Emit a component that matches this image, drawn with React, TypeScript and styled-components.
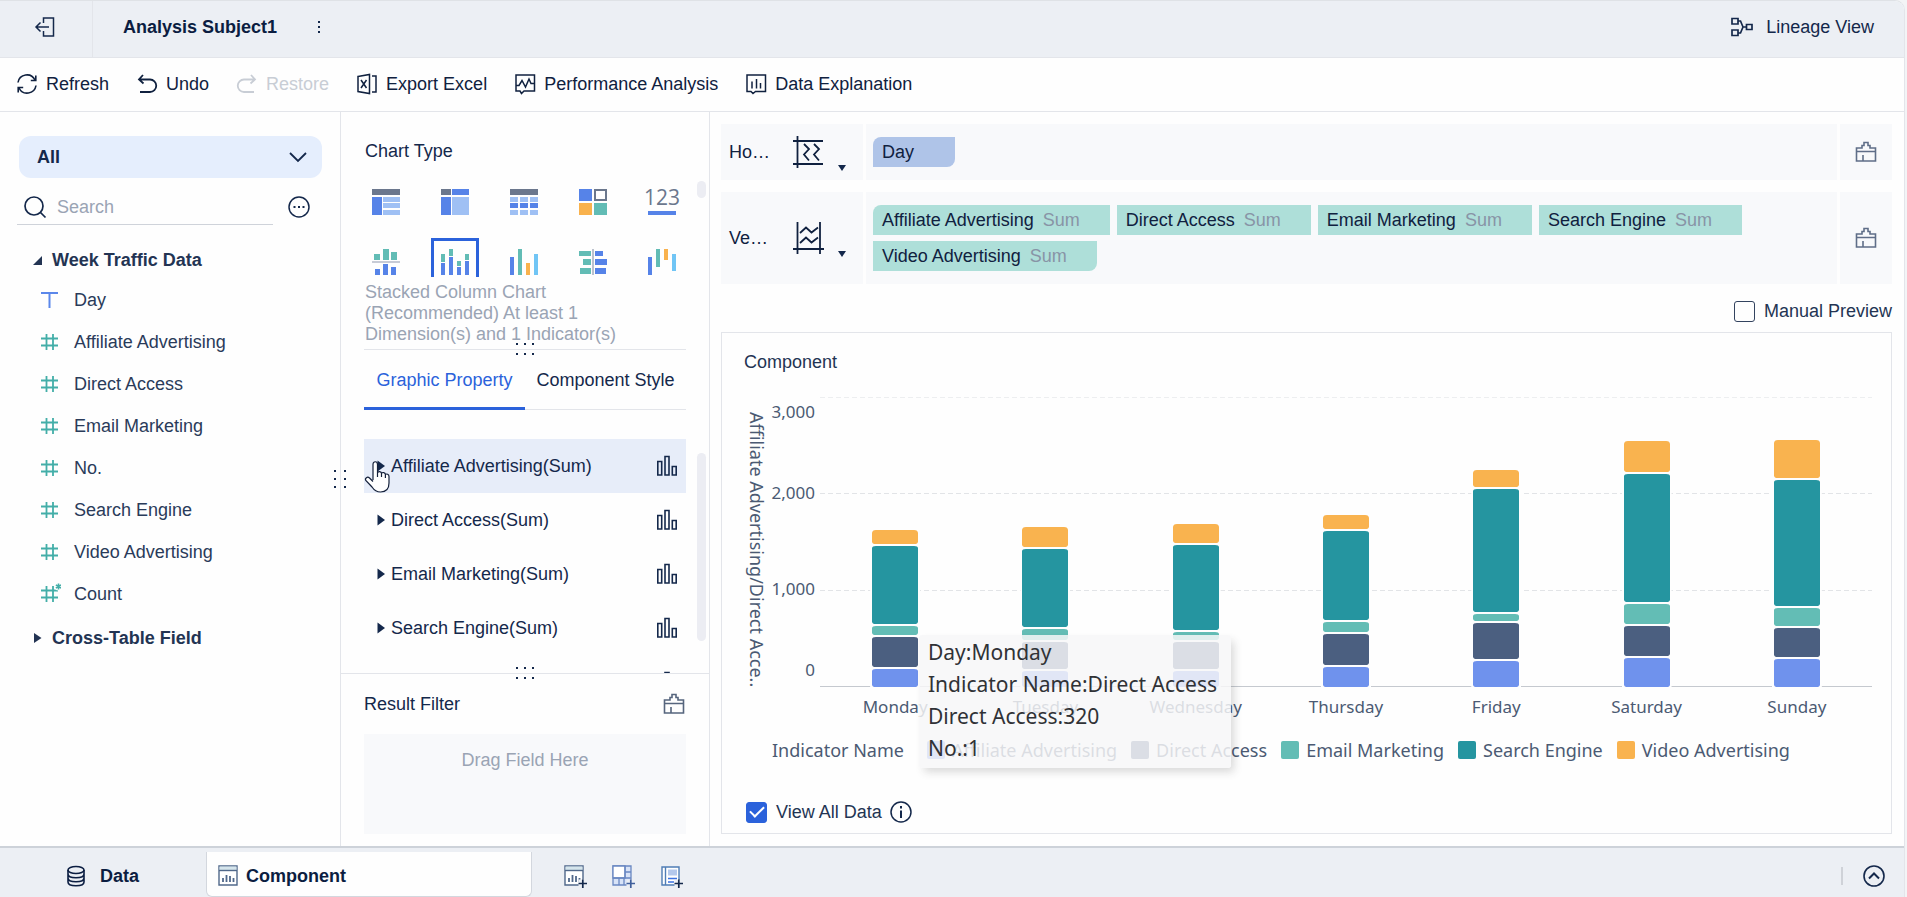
import React from "react";
import styled, { createGlobalStyle, css } from "styled-components";

const ink = "#14284b";
const line = "#e3e5ea";
const muted = "#9aa4b4";
const blue = "#2b62db";
const chartFont = `"Noto Sans", "Open Sans", sans-serif`;

const GlobalStyle = createGlobalStyle`
  * { box-sizing: border-box; }
  html, body, #root { height: 100%; margin: 0; }
  body {
    background: #f3f4f6;
    color: ${ink};
    font: 18px/22px "Liberation Sans", Arial, sans-serif;
    overflow: hidden;
  }
  button, input, select { font: inherit; color: inherit; }
  button { border: 0; padding: 0; background: none; cursor: pointer; text-align: left; }
  ul { list-style: none; margin: 0; padding: 0; }
  h1, h2, p { margin: 0; font: inherit; }
`;

/* ---------- shell ---------- */

const Shell = styled.div`
  height: 100%;
  min-height: 720px;
  margin-right: 2px;
  display: flex;
  flex-direction: column;
  background: #fefefe;
  border-top: 1px solid #dfe2e6;
  border-right: 1px solid ${line};
  border-top-right-radius: 10px;
  overflow: hidden;
`;

const Header = styled.header`
  height: 57px;
  flex: none;
  display: flex;
  align-items: stretch;
  background: #eceff4;
  border-bottom: 1px solid ${line};
  padding-bottom: 4px;
`;

const ExitButton = styled.button`
  width: 93px;
  margin-bottom: -4px;
  padding: 0 0 4px 34px;
  border-right: 1px solid ${line};
  display: flex;
  align-items: center;
`;

const Title = styled.h1`
  align-self: center;
  margin-left: 30px;
  font-weight: bold;
  color: #0b1d41;
`;

const MoreButton = styled.button`
  margin-left: 32px;
  width: 20px;
  display: flex;
  align-items: center;
  justify-content: center;
`;

const LineageButton = styled.button`
  margin-left: auto;
  margin-right: 30px;
  display: flex;
  align-items: center;
  gap: 13px;
`;

const Toolbar = styled.nav`
  height: 54px;
  flex: none;
  display: flex;
  align-items: center;
  gap: 27px;
  padding: 0 0 2px 16px;
  border-bottom: 1px solid ${line};
`;

const ToolButton = styled.button`
  display: flex;
  align-items: center;
  gap: 8px;
  color: #10213f;
  white-space: nowrap;
  &:disabled { color: #c8cdd5; }
`;

const Icon = styled.svg<{ $size?: number; $w?: number }>`
  width: ${(p) => p.$size ?? 22}px;
  height: ${(p) => p.$size ?? 22}px;
  flex: none;
  display: block;
  fill: none;
  stroke: currentColor;
  stroke-width: ${(p) => p.$w ?? 1.6};
`;

const Body = styled.div`
  flex: 1;
  min-height: 0;
  display: grid;
  grid-template-columns: 341px 369px minmax(0, 1fr);
`;

/* ---------- fields panel ---------- */

const FieldsPanel = styled.aside`
  position: relative;
  border-right: 1px solid ${line};
  padding: 24px 18px 0 19px;
`;

const SelectWrap = styled.label`
  position: relative;
  display: block;
  svg { position: absolute; right: 13px; top: 10px; pointer-events: none; }
`;

const TableSelect = styled.select`
  appearance: none;
  width: 100%;
  height: 42px;
  padding: 0 18px;
  border: 0;
  border-radius: 12px;
  background: #e5eefd;
  font-weight: bold;
  color: #14284b;
`;

const SearchRow = styled.div`
  display: flex;
  align-items: center;
  gap: 14px;
  margin: 11px 11px 0 -2px;
`;

const SearchBox = styled.label`
  flex: 1;
  min-width: 0;
  height: 36px;
  display: flex;
  align-items: center;
  gap: 10px;
  padding-left: 6px;
  border-bottom: 1px solid #cfd3da;
`;

const SearchInput = styled.input`
  flex: 1;
  min-width: 0;
  border: 0;
  padding: 0;
  outline: 0;
  background: none;
  &::placeholder { color: ${muted}; opacity: 1; }
`;

const IconButton = styled.button<{ $tone?: string }>`
  display: flex;
  align-items: center;
  justify-content: center;
  color: ${(p) => p.$tone ?? ink};
`;

const GroupButton = styled.button`
  display: flex;
  align-items: center;
  gap: 9px;
  height: 44px;
  padding-left: 14px;
  font-weight: bold;
  color: #233453;
`;

const FieldGroups = styled.div`
  margin-top: 13px;
`;

const FieldItem = styled.button`
  display: flex;
  align-items: center;
  gap: 13px;
  width: 100%;
  height: 42px;
  padding-left: 20px;
  color: #2a3b5a;
`;

const FieldList = styled.ul`
  margin: -3px 0 1px;
`;

/* ---------- drag handles, scroll thumbs ---------- */

const Grip = styled.svg<{ $upright?: boolean }>`
  position: absolute;
  fill: ${ink};
  ${(p) =>
    p.$upright
      ? css`right: -8px; top: 357px; width: 15px; height: 21px;`
      : css`left: 50%; bottom: -6px; margin-left: -10px; width: 21px; height: 13px;`}
`;

const Thumb = styled.div<{ $top: number; $height: number }>`
  position: absolute;
  right: 3px;
  top: ${(p) => p.$top}px;
  height: ${(p) => p.$height}px;
  width: 9px;
  border-radius: 5px;
  background: #ecedf3;
`;

/* ---------- property panel ---------- */

const PropertyPanel = styled.section`
  position: relative;
  min-height: 0;
  display: flex;
  flex-direction: column;
  border-right: 1px solid ${line};
`;

const ChartTypes = styled.div`
  position: relative;
  flex: none;
  height: 238px;
  margin: 0 23px;
  padding-top: 28px;
  border-bottom: 1px solid ${line};
  h2, p { padding-left: 1px; }
`;

const TypeGrid = styled.div`
  display: grid;
  grid-template-columns: repeat(5, 48px);
  justify-content: space-between;
  row-gap: 12px;
  height: 99px;
  margin: 16px 0 0 -2px;
  overflow: hidden;
`;

const TypeButton = styled.button<{ $active?: boolean }>`
  display: flex;
  align-items: center;
  justify-content: center;
  height: 48px;
  border: 3px solid ${(p) => (p.$active ? blue : "transparent")};
`;

const TypeIcon = styled.svg`
  width: 28px;
  height: 26px;
  flex: none;
  overflow: visible;
`;

const TypeHint = styled.p`
  margin-top: 5px;
  max-width: 290px;
  line-height: 21px;
  color: ${muted};
`;

const Tabs = styled.div`
  flex: none;
  display: flex;
  height: 60px;
  margin: 0 23px;
  box-shadow: inset 0 -1px ${line};
`;

const Tab = styled.button<{ $active?: boolean }>`
  flex: 1;
  text-align: center;
  white-space: nowrap;
  color: ${(p) => (p.$active ? blue : ink)};
  border-top: 3px solid transparent;
  border-bottom: 3px solid ${(p) => (p.$active ? blue : "transparent")};
`;

const Indicators = styled.div`
  position: relative;
  flex: 1;
  min-height: 0;
  border-bottom: 1px solid ${line};
`;

const IndicatorList = styled.ul`
  height: 100%;
  padding: 29px 23px 0;
  overflow: hidden;
`;

const IndicatorRow = styled.li<{ $hover?: boolean }>`
  height: 54px;
  display: flex;
  align-items: center;
  justify-content: space-between;
  padding: 0 8px 0 13px;
  background: ${(p) => (p.$hover ? "#e7edf9" : "transparent")};
`;

const IndicatorName = styled.button`
  display: flex;
  align-items: center;
  gap: 6px;
`;

const Pointer = styled.svg`
  position: absolute;
  left: 23px;
  top: 50px;
  width: 27px;
  height: 34px;
`;

const FilterSection = styled.div`
  flex: none;
  padding: 0 23px 12px;
`;

const FilterHead = styled.div`
  height: 60px;
  display: flex;
  align-items: center;
  justify-content: space-between;
  padding-right: 1px;
`;

const DropZone = styled.div`
  height: 100px;
  padding-top: 15px;
  text-align: center;
  color: ${muted};
  background: #f8f9fb;
`;

/* ---------- workspace ---------- */

const Workspace = styled.main`
  min-width: 0;
  display: flex;
  flex-direction: column;
  padding: 12px 12px 12px 11px;
`;

const Shelf = styled.div`
  flex: none;
  display: grid;
  grid-template-columns: 142px minmax(0, 1fr) 52px;
  gap: 3px;
  margin-bottom: 12px;
  > * { background: #f8f9fb; }
`;

const ShelfLabel = styled.div`
  display: flex;
  align-items: center;
  padding-left: 8px;
  color: #10213f;
`;

const AxisButton = styled.button`
  display: flex;
  align-items: center;
  gap: 14px;
  height: 38px;
  margin-left: auto;
  margin-right: 17px;
  > :last-child { align-self: flex-end; }
`;

const Pills = styled.ul`
  display: flex;
  flex-wrap: wrap;
  gap: 6px 7px;
  padding: 13px 7px;
`;

const Pill = styled.li<{ $tone: "blue" | "green" }>`
  height: 30px;
  min-width: 82px;
  display: flex;
  align-items: center;
  gap: 9px;
  padding: 0 30px 0 9px;
  color: #10213f;
  white-space: nowrap;
  background: ${(p) => (p.$tone === "blue" ? "#afc4e8" : "#aedfd9")};
  &:first-child { border-top-left-radius: 8px; }
  &:last-child { border-bottom-right-radius: 8px; }
`;

const Aggregate = styled.span`
  color: #8894a6;
`;

const PreviewRow = styled.div`
  flex: none;
  display: flex;
  justify-content: flex-end;
  align-items: center;
  height: 48px;
  margin-top: -12px;
  padding-top: 6px;
`;

const CheckLabel = styled.label`
  display: flex;
  align-items: center;
  gap: 9px;
  color: #233453;
`;

const Check = styled.input`
  appearance: none;
  width: 21px;
  height: 21px;
  margin: 0;
  border: 1px solid #33435f;
  border-radius: 3px;
  display: grid;
  place-items: center;
  &:checked { background: ${blue}; border-color: ${blue}; }
  &:checked::after {
    content: "";
    width: 12px;
    height: 6px;
    border: solid #fff;
    border-width: 0 0 2px 2px;
    transform: translateY(-2px) rotate(-45deg);
  }
`;

const Card = styled.section`
  flex: 1;
  min-height: 0;
  display: flex;
  flex-direction: column;
  padding: 18px 19px 0 22px;
  border: 1px solid ${line};
`;

const CardTitle = styled.h2`
  flex: none;
  color: #233453;
`;

const Chart = styled.div`
  flex: 1;
  min-height: 0;
  display: grid;
  grid-template-columns: 25px 46px minmax(0, 1fr);
  grid-template-rows: minmax(0, 1fr) 24px;
  row-gap: 8px;
  margin-top: 24px;
  font-family: ${chartFont};
  font-size: 17px;
  color: #4b5a73;
`;

const AxisTitle = styled.div`
  writing-mode: vertical-rl;
  align-self: end;
  white-space: nowrap;
  font-size: 18px;
  line-height: 25px;
`;

const Ticks = styled.div`
  display: grid;
  grid-template-rows: 1fr 2fr 2fr 1fr;
  align-items: center;
  padding-bottom: 2px;
  text-align: right;
  line-height: 30px;
  :first-child { align-self: start; }
  :last-child { align-self: end; }
`;

const Plot = styled.div`
  position: relative;
  display: grid;
  margin-left: 5px;
  > * { grid-area: 1 / 1; }
`;

const GridLines = styled.div`
  display: grid;
  grid-template-rows: repeat(3, 1fr);
  border-bottom: 1px solid #c5c9cf;
`;

const GridLine = styled.div<{ $faint?: boolean }>`
  opacity: ${(p) => (p.$faint ? 0.6 : 1)};
  background: repeating-linear-gradient(90deg, #e2e4e7 0 5px, transparent 5px 8px) top / 100% 1px no-repeat;
`;

const Bars = styled.div`
  display: grid;
  grid-template-columns: repeat(7, 1fr);
  align-items: end;
  justify-items: center;
`;

const Bar = styled.div`
  width: 46px;
  display: flex;
  flex-direction: column-reverse;
  background: #fefefe;
  box-shadow: 0 0 0 2px #fefefe;
  clip-path: inset(-2px -2px 0 -2px);
`;

const Segment = styled.div<{ $color: string }>`
  border-top: 2px solid transparent;
  border-radius: 4px 4px 2px 2px;
  background: ${(p) => p.$color} padding-box;
  &:last-child { border-top-width: 1px; }
`;

const DayLabels = styled.div`
  grid-column: 3;
  margin-left: 5px;
  display: grid;
  grid-template-columns: repeat(7, 1fr);
  text-align: center;
  line-height: 24px;
`;

const Legend = styled.ul`
  flex: none;
  display: flex;
  align-items: center;
  gap: 14px;
  height: 24px;
  margin: 19px 0 0 28px;
  font-family: ${chartFont};
  color: #4b5a73;
  white-space: nowrap;
`;

const LegendTitle = styled.li`
  margin-right: 9px;
`;

const LegendItem = styled.li<{ $color: string }>`
  display: flex;
  align-items: center;
  gap: 7px;
  &::before {
    content: "";
    width: 18px;
    height: 18px;
    border-radius: 2px;
    background: ${(p) => p.$color};
  }
`;

const Tooltip = styled.div`
  position: absolute;
  z-index: 1;
  left: 99px;
  top: 238px;
  width: 312px;
  padding: 1px 0 4px 9px;
  border-radius: 3px;
  background: rgba(247, 247, 248, 0.84);
  box-shadow: 4px 5px 8px -1px rgba(50, 50, 50, 0.18);
  font-size: 21px;
  line-height: 32px;
  color: #303236;
  white-space: nowrap;
`;

const CardFoot = styled.div`
  flex: none;
  display: flex;
  align-items: center;
  gap: 7px;
  height: 42px;
  margin: 29px 0 0 2px;
`;

/* ---------- bottom tabs ---------- */

const Footer = styled.footer`
  flex: none;
  height: 51px;
  display: flex;
  background: #eceff4;
  border-top: 2px solid #cdd2d9;
  padding-top: 4px;
`;

const SheetTab = styled.button<{ $active?: boolean }>`
  display: flex;
  align-items: center;
  padding-top: 3px;
  font-weight: bold;
  color: #0b1d41;
  ${(p) =>
    p.$active
      ? css`
          width: 326px;
          gap: 5px;
          padding-left: 10px;
          background: #fefefe;
          border: 1px solid #d3d7de;
          border-top: 0;
          border-radius: 0 0 6px 6px;
        `
      : css`
          width: 206px;
          gap: 12px;
          padding-left: 66px;
        `}
`;

const AddSheets = styled.div`
  display: flex;
  gap: 24px;
  padding: 2px 0 0 31px;
`;

const Collapse = styled.div`
  margin-left: auto;
  align-self: center;
  display: flex;
  padding: 0 18px 0 19px;
  border-left: 2px solid #cfd2d8;
  height: 18px;
  margin-top: 2px;
  align-items: center;
`;

/* ---------- icons ---------- */

const HashIcon = ({ starred = false }: { starred?: boolean }) => (
  <Icon viewBox="0 0 22 22" $w={1.8} color="#43aea8">
    <path d="M2 7.5h17M2 14.5h17M7.5 3v16M14 3v16" />
    {starred && (
      <g>
        <circle cx="19.5" cy="3.5" r="4" fill="#fefefe" stroke="none" />
        <path d="M19.5 .5v6M16.900 2l5.200 3M22.100 2l-5.200 3" strokeWidth="1.6" />
      </g>
    )}
  </Icon>
);

const TextIcon = () => (
  <Icon viewBox="0 0 22 22" $w={2} color="#5b87ea">
    <path d="M2 4h17M10.5 4v15" />
  </Icon>
);

const CaretRight = () => (
  <svg width="8" height="12" viewBox="0 0 8 12" fill={ink}>
    <path d="M.5 .5v11L8 6z" />
  </svg>
);

const BrushIcon = () => (
  <Icon viewBox="0 0 22 22" $w={1.6}>
    <path d="M1.500 7h5.500V4.500h2V1.500h4v3h2V7h5.500v13H1.500zM1.500 10.500h19M8 14v6" />
  </Icon>
);

const BarsIcon = () => (
  <Icon viewBox="0 0 22 22" $w={1.6}>
    <path d="M1.800 6.500h3.900v13.500H1.800zM9 1.500h4v18.500H9zM16.300 11.500h3.900V20h-3.900z" />
  </Icon>
);

const ChartPageIcon = ({ plus = false }: { plus?: boolean }) => (
  <Icon viewBox="0 0 24 24" $size={24} $w={1.4} color="#50688a">
    <path d="M2 2h18v19H2z" fill="#fff" />
    <path d="M2.500 2.500h17v3.500h-17z" fill="#d5e5ec" stroke="none" />
    <path d="M2 6.500h18" />
    <path d="M6 18v-4M9.500 18v-7M13 18v-6M16.500 18v-4" strokeWidth="1.800" />
    {plus && (
      <g>
        <path d="M15.500 15.500h8v8h-8z" fill="#eceff4" stroke="none" />
        <path d="M15.500 19.500h8.500M19.800 15.500v8.500" stroke="#14284b" strokeWidth="1.700" />
      </g>
    )}
  </Icon>
);

const DashboardIcon = () => (
  <Icon viewBox="0 0 24 24" $size={24} $w={1.3} color="#6a88c2">
    <path d="M2 2h18v19H2z" fill="#d8e3f7" />
    <path d="M2 2h12v12H2z" fill="#fff" />
    <path d="M14 2v12H2M14 8h6M14 14h6M8 14v7M13 14v7" />
    <path d="M15.500 15.500h8v8h-8z" fill="#eceff4" stroke="none" />
    <path d="M15.500 19.500h8.500M19.800 15.500v8.500" stroke="#3f5f9c" strokeWidth="1.700" />
  </Icon>
);

const ReportIcon = () => (
  <Icon viewBox="0 0 24 24" $size={24} $w={1.400} color="#4f7db5">
    <path d="M3 3h17v18H3z" fill="#fff" />
    <path d="M6.500 3v18" />
    <path d="M9 5.500h9v6H9z" fill="#b3c8ec" stroke="none" />
    <path d="M9 14.500h9M9 18h6" stroke="#3b72e0" />
    <path d="M15.500 16h8v7.500h-8z" fill="#eceff4" stroke="none" />
    <path d="M15.500 19.500h8.500M19.800 15.500v8.500" stroke="#14284b" strokeWidth="1.700" />
  </Icon>
);

const B = "#5683e8";
const L = "#9fc0f4";
const G = "#6b778d";
const T = "#62bcb5";
const O = "#f9b24d";
const S = "#70c5f5";

type Block = [number, number, number, number, string];

const chartTypes: { name: string; blocks: Block[] }[] = [
  { name: "Grouped Table", blocks: [[0, 0, 28, 6, G], [0, 8, 10, 18, B], [11, 8, 17, 5, L], [11, 14, 17, 5, L], [11, 21, 17, 5, L]] },
  { name: "Cross Table", blocks: [[0, 0, 10, 6, G], [11, 0, 17, 6, B], [0, 8, 10, 18, B], [11, 8, 17, 18, L]] },
  {
    name: "Detail Table",
    blocks: [
      [0, 0, 28, 6, G],
      ...[8, 14, 21].flatMap((y, r) => [0, 10, 20].map((x): Block => [x, y, 8, 5, r === 1 ? B : L])),
    ],
  },
  { name: "Color Table", blocks: [[0, 0, 13, 12, B], [0, 14, 13, 12, O], [15, 14, 13, 12, T]] },
  { name: "KPI Card", blocks: [[0, 22, 28, 4, B]] },
  { name: "Contrast Column", blocks: [[2, 5, 6, 6, T], [11, 0, 6, 11, T], [19, 3, 6, 8, T], [0, 12, 28, 2, "#c7cbd6"], [3, 20, 5, 6, B], [11, 15, 5, 11, B], [19, 18, 5, 8, B]] },
  { name: "Stacked Column", blocks: [[0, 5, 4, 8, T], [0, 14, 4, 12, B], [8, 0, 4, 7, T], [8, 8, 4, 18, B], [16, 12, 4, 5, T], [16, 18, 4, 8, B], [24, 5, 4, 6, T], [24, 12, 4, 14, B]] },
  { name: "Multi-Series Column", blocks: [[0, 8, 4, 18, B], [8, 0, 4, 26, T], [16, 14, 4, 12, O], [24, 5, 4, 21, S]] },
  { name: "Contrast Bar", blocks: [[0, 2, 12, 5, T], [4, 10, 8, 6, T], [1, 19, 11, 6, T], [13, 0, 2, 26, "#bcc2cd"], [16, 2, 8, 5, B], [16, 10, 12, 6, B], [16, 19, 11, 6, B]] },
  { name: "Range Column", blocks: [[0, 8, 4, 18, B], [8, 0, 4, 18, T], [16, 0, 4, 11, O], [24, 5, 4, 17, S]] },
];

/* ---------- data ---------- */

const fields = ["Day", "Affiliate Advertising", "Direct Access", "Email Marketing", "No.", "Search Engine", "Video Advertising", "Count"];

const indicators = ["Affiliate Advertising", "Direct Access", "Email Marketing", "Search Engine", "Video Advertising"];

const seriesColors = ["#6f92ed", "#4b5f80", "#63bdb5", "#2595a0", "#f9b34f"];

const axisMax = 3000;

const week: { day: string; values: number[] }[] = [
  { day: "Monday", values: [210, 325, 112, 824, 151] },
  { day: "Tuesday", values: [182, 302, 132, 822, 213] },
  { day: "Wednesday", values: [182, 306, 96, 902, 198] },
  { day: "Thursday", values: [223, 340, 127, 934, 155] },
  { day: "Friday", values: [290, 390, 90, 1290, 190] },
  { day: "Saturday", values: [320, 330, 230, 1340, 330] },
  { day: "Sunday", values: [305, 325, 205, 1323, 402] },
];

const GripDots = ({ upright = false }: { upright?: boolean }) => (
  <Grip $upright={upright} viewBox={upright ? "0 0 15 21" : "0 0 21 13"}>
    {[0, 1, 2].flatMap((i) =>
      [0, 1].map((j) => (
        <rect key={`${i}-${j}`} width="2" height="2" x={upright ? 1 + j * 10 : 1 + i * 8} y={upright ? 1 + i * 8 : 1 + j * 10} />
      ))
    )}
  </Grip>
);

export default function App() {
  return (
    <>
      <GlobalStyle />
      <Shell>
        <Header>
          <ExitButton aria-label="Exit">
            <Icon viewBox="0 0 22 22" $w={1.5}>
              <path d="M9.500 7V2h10v18h-10v-5M15 11H2.500M6.500 6.500L2 11l4.500 4.500" />
            </Icon>
          </ExitButton>
          <Title>Analysis Subject1</Title>
          <MoreButton aria-label="More">
            <svg width="4" height="14" viewBox="0 0 4 14" fill={ink}>
              <path d="M1 1h2v2H1zM1 6h2v2H1zM1 11h2v2H1z" />
            </svg>
          </MoreButton>
          <LineageButton>
            <Icon viewBox="0 0 22 22" $w={1.7}>
              <path d="M1 2.500h6v5.500H1zM1 14h6v5.500H1zM15.500 8.500h5.500v5h-5.500zM7 5h2.500l2.500 6h3.500M7 17h2.500l2.500-6" />
            </Icon>
            Lineage View
          </LineageButton>
        </Header>

        <Toolbar>
          <ToolButton>
            <Icon viewBox="0 0 22 22">
              <path d="M2 9.500A9 9 0 0 1 19 7M20 12.500A9 9 0 0 1 3 15M19.800 2.500v5h-5M2.200 19.500v-5h5" />
            </Icon>
            Refresh
          </ToolButton>
          <ToolButton>
            <Icon viewBox="0 0 22 22" $w={1.8}>
              <path d="M7 2L3 6.500l4.500 4M3 6.500h11a6 6 0 0 1 0 12.500H4" />
            </Icon>
            Undo
          </ToolButton>
          <ToolButton disabled>
            <Icon viewBox="0 0 22 22" $w={1.8}>
              <path d="M15 2l4 4.500-4.500 4M19 6.500H8A6 6 0 0 0 8 19h10" />
            </Icon>
            Restore
          </ToolButton>
          <ToolButton>
            <Icon viewBox="0 0 22 22" $w={1.5}>
              <path d="M2 3.500L13.500 1.500v19L2 18.500zM16 3h4v16h-4M5 7l5.500 8M10.500 7L5 15" />
            </Icon>
            Export Excel
          </ToolButton>
          <ToolButton>
            <Icon viewBox="0 0 22 22" $w={1.5}>
              <path d="M2 2h18.500v16H10l-2.500 2.500L6 18H2zM2 12.500h3l3-5 3.500 6.500 3.500-8 2 4.500h3.500" />
            </Icon>
            Performance Analysis
          </ToolButton>
          <ToolButton>
            <Icon viewBox="0 0 22 22" $w={1.5}>
              <path d="M2 2h18.500v16.500H10.500L8 20.500l-2-2H2zM7 8.500v7M11.500 6v9.500M15.500 10v5.500" />
            </Icon>
            Data Explanation
          </ToolButton>
        </Toolbar>

        <Body>
          <FieldsPanel>
            <SelectWrap>
              <TableSelect aria-label="Data table">
                <option>All</option>
              </TableSelect>
              <Icon viewBox="0 0 22 22" $w={1.8}>
                <path d="M3 7l8 8 8-8" />
              </Icon>
            </SelectWrap>
            <SearchRow>
              <SearchBox>
                <Icon viewBox="0 0 24 24" $size={24} $w={1.7}>
                  <circle cx="11" cy="11" r="9" />
                  <path d="M17.500 17.500l5 5" />
                </Icon>
                <SearchInput placeholder="Search" aria-label="Search fields" />
              </SearchBox>
              <IconButton aria-label="More options">
                <Icon viewBox="0 0 24 24" $size={24} $w={1.500}>
                  <circle cx="12" cy="12" r="10" />
                  <path d="M6.500 12h2M11 12h2M15.500 12h2" strokeWidth="2" />
                </Icon>
              </IconButton>
            </SearchRow>
            <FieldGroups>
              <GroupButton>
                <svg width="10" height="10" viewBox="0 0 10 10" fill="#233453">
                  <path d="M9 1v9H0z" />
                </svg>
                Week Traffic Data
              </GroupButton>
              <FieldList>
                {fields.map((f) => (
                  <li key={f}>
                    <FieldItem>
                      {f === "Day" ? <TextIcon /> : <HashIcon starred={f === "Count"} />}
                      {f}
                    </FieldItem>
                  </li>
                ))}
              </FieldList>
              <GroupButton>
                <svg width="10" height="12" viewBox="0 0 10 12" fill="#233453">
                  <path d="M1 1v10L8.500 6z" />
                </svg>
                Cross-Table Field
              </GroupButton>
            </FieldGroups>
            <GripDots upright />
          </FieldsPanel>

          <PropertyPanel>
            <ChartTypes>
              <h2>Chart Type</h2>
              <TypeGrid>
                {chartTypes.map(({ name, blocks }) => (
                  <TypeButton key={name} aria-label={name} $active={name === "Stacked Column"}>
                    <TypeIcon viewBox="0 0 28 26">
                      {blocks.map(([x, y, w, h, c], i) => (
                        <rect key={i} x={x} y={y} width={w} height={h} fill={c} />
                      ))}
                      {name === "Color Table" && <rect x="16" y="1" width="11" height="10" fill="none" stroke={G} strokeWidth="2" />}
                      {name === "KPI Card" && (
                        <text x="14" y="16" textAnchor="middle" fontFamily={`"Liberation Sans Narrow", "Open Sans", sans-serif`} fontSize="21" fill={G}>
                          123
                        </text>
                      )}
                    </TypeIcon>
                  </TypeButton>
                ))}
              </TypeGrid>
              <TypeHint>Stacked Column Chart (Recommended) At least 1 Dimension(s) and 1 Indicator(s)</TypeHint>
              <GripDots />
            </ChartTypes>
            <Tabs role="tablist">
              <Tab role="tab" aria-selected $active>Graphic Property</Tab>
              <Tab role="tab" aria-selected={false}>Component Style</Tab>
            </Tabs>
            <Indicators>
              <IndicatorList>
                {indicators.map((name, i) => (
                  <IndicatorRow key={name} $hover={i === 0}>
                    <IndicatorName>
                      <CaretRight />
                      {name}(Sum)
                    </IndicatorName>
                    <IconButton aria-label={`Chart type of ${name}`}>
                      <BarsIcon />
                    </IconButton>
                  </IndicatorRow>
                ))}
              </IndicatorList>
              <Thumb $top={43} $height={188} />
              <GripDots />
              <Pointer viewBox="0 0 27 34">
                <path
                  d="M9 20V4.500C9 .8 13.500 .8 13.500 4.500V13c.5-2 4-1.800 4 .5.8-1.600 3.700-1.200 3.900 1 1.200-1 3.600-.4 3.600 2V23c0 6-3.500 9-8.500 9-4.500 0-6.500-2-8.500-5L1.800 20.500C.5 18 3.500 16.200 5.500 18L9 21.500M13.500 13v4M17.500 13.500V17M21.400 14.500V18"
                  fill="#fff"
                  stroke="#14203a"
                  strokeWidth="1.200"
                />
              </Pointer>
            </Indicators>
            <FilterSection>
              <FilterHead>
                <h2>Result Filter</h2>
                <IconButton aria-label="Clear result filter" $tone="#56657d">
                  <BrushIcon />
                </IconButton>
              </FilterHead>
              <DropZone>Drag Field Here</DropZone>
            </FilterSection>
            <Thumb $top={69} $height={17} />
          </PropertyPanel>

          <Workspace>
            <Shelf>
              <ShelfLabel>
                Ho…
                <AxisButton aria-label="Horizontal axis options">
                  <Icon viewBox="0 0 32 32" $size={32} $w={1.800}>
                    <path d="M5.500 0v32M1 5h30M1 28h30M12 8l5 5-5 5.500 5 6M22 8l5 5-5 5.500 5 6" />
                  </Icon>
                  <svg width="8" height="6" viewBox="0 0 8 6" fill={ink}><path d="M0 0h8L4 6z" /></svg>
                </AxisButton>
              </ShelfLabel>
              <Pills>
                <Pill $tone="blue">Day</Pill>
              </Pills>
              <IconButton aria-label="Clear horizontal axis" $tone="#5f6e88">
                <BrushIcon />
              </IconButton>
            </Shelf>
            <Shelf>
              <ShelfLabel>
                Ve…
                <AxisButton aria-label="Vertical axis options">
                  <Icon viewBox="0 0 32 32" $size={32} $w={1.800}>
                    <path d="M5.500 0v32M28 0v32M1 27h31M8 11l6-5.500 5.500 5 6.500-5M8 21l6-5.500 5.500 5 6.500-5" />
                  </Icon>
                  <svg width="8" height="6" viewBox="0 0 8 6" fill={ink}><path d="M0 0h8L4 6z" /></svg>
                </AxisButton>
              </ShelfLabel>
              <Pills>
                {indicators.map((name) => (
                  <Pill key={name} $tone="green">
                    {name}
                    <Aggregate>Sum</Aggregate>
                  </Pill>
                ))}
              </Pills>
              <IconButton aria-label="Clear vertical axis" $tone="#5f6e88">
                <BrushIcon />
              </IconButton>
            </Shelf>

            <PreviewRow>
              <CheckLabel>
                <Check type="checkbox" />
                Manual Preview
              </CheckLabel>
            </PreviewRow>

            <Card>
              <CardTitle>Component</CardTitle>
              <Chart>
                <AxisTitle>Affiliate Advertising/Direct Acce..</AxisTitle>
                <Ticks>
                  <span>3,000</span>
                  <span>2,000</span>
                  <span>1,000</span>
                  <span>0</span>
                </Ticks>
                <Plot>
                  <GridLines>
                    <GridLine $faint />
                    <GridLine />
                    <GridLine />
                  </GridLines>
                  <Bars>
                    {week.map(({ day, values }) => {
                      const total = values.reduce((a, b) => a + b, 0);
                      return (
                        <Bar key={day} style={{ height: `calc(${(total / axisMax) * 100}% + 1px)` }}>
                          {values.map((v, i) => (
                            <Segment key={i} $color={seriesColors[i]} style={{ height: `${(v / total) * 100}%` }} />
                          ))}
                        </Bar>
                      );
                    })}
                  </Bars>
                  <Tooltip role="tooltip">
                    <div>Day:Monday</div>
                    <div>Indicator Name:Direct Access</div>
                    <div>Direct Access:320</div>
                    <div>No.:1</div>
                  </Tooltip>
                </Plot>
                <DayLabels>
                  {week.map(({ day }) => (
                    <span key={day}>{day}</span>
                  ))}
                </DayLabels>
              </Chart>
              <Legend>
                <LegendTitle>Indicator Name</LegendTitle>
                {indicators.map((name, i) => (
                  <LegendItem key={name} $color={seriesColors[i]}>
                    {name}
                  </LegendItem>
                ))}
              </Legend>
              <CardFoot>
                <CheckLabel>
                  <Check type="checkbox" defaultChecked />
                  View All Data
                </CheckLabel>
                <IconButton aria-label="About viewing all data">
                  <Icon viewBox="0 0 24 24" $size={24} $w={1.500}>
                    <circle cx="12" cy="12" r="10" />
                    <path d="M12 10.500v7.500M12 6v2.500" strokeWidth="2" />
                  </Icon>
                </IconButton>
              </CardFoot>
            </Card>
          </Workspace>
        </Body>

        <Footer>
          <SheetTab>
            <Icon viewBox="0 0 22 22" $w={1.600}>
              <ellipse cx="10" cy="5" rx="8" ry="3.500" />
              <path d="M2 5v12c0 5 16 5 16 0V5M2 9c0 5 16 5 16 0M2 13c0 5 16 5 16 0" />
            </Icon>
            Data
          </SheetTab>
          <SheetTab $active>
            <ChartPageIcon />
            Component
          </SheetTab>
          <AddSheets>
            <IconButton aria-label="Add component"><ChartPageIcon plus /></IconButton>
            <IconButton aria-label="Add dashboard"><DashboardIcon /></IconButton>
            <IconButton aria-label="Add report"><ReportIcon /></IconButton>
          </AddSheets>
          <Collapse>
            <IconButton aria-label="Expand">
              <Icon viewBox="0 0 24 24" $size={24} $w={1.600}>
                <circle cx="12" cy="12" r="10" />
                <path d="M7 14.500l5-5 5 5" strokeWidth="2" />
              </Icon>
            </IconButton>
          </Collapse>
        </Footer>
      </Shell>
    </>
  );
}
